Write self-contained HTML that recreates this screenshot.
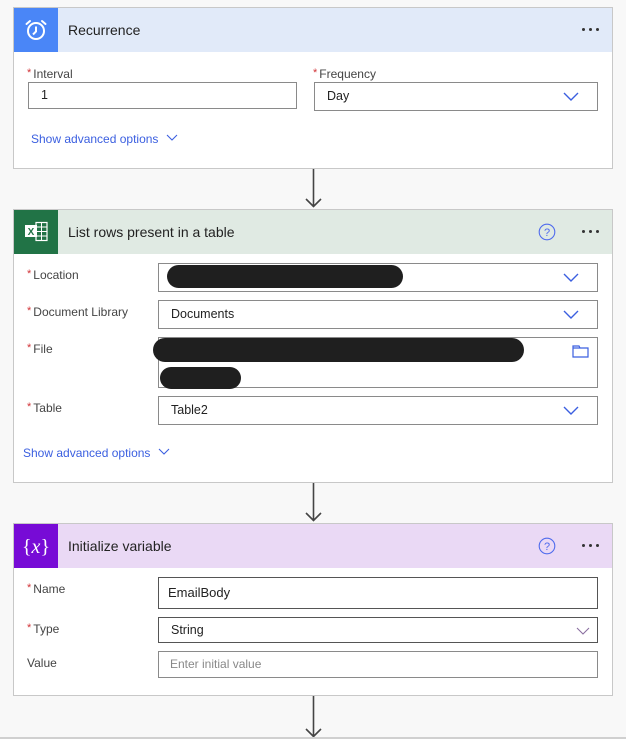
<!DOCTYPE html>
<html><head><meta charset="utf-8">
<style>
*{margin:0;padding:0;box-sizing:border-box}
body{width:626px;height:739px;background:#f8f8f8;font-family:"Liberation Sans",sans-serif;position:relative;overflow:hidden;color:#222}
.a{position:absolute}
.card{position:absolute;left:13px;width:600px;background:#fff;border:1px solid #c8c8c8}
.hdr{position:absolute;left:0;top:0;width:598px;height:44px}
.ic{position:absolute;left:0;top:0;width:44px;height:44px}
.title{position:absolute;left:54px;top:14px;font-size:14px;color:#222}
.dots{position:absolute;right:12px;top:20px;width:18px;height:3px}
.dots i{position:absolute;top:0;width:3px;height:3px;border-radius:50%;background:#333}
.lbl{position:absolute;font-size:12px;color:#444}
.lbl b{color:#d13438;font-weight:normal;font-size:11px;margin-right:2px;vertical-align:2px}
.inp{position:absolute;border:1px solid #8a8a8a;background:#fff;font-size:12.5px;color:#222;padding-left:12px}
.adv{position:absolute;font-size:12px;color:#3b5fe0}
.blob{position:absolute;background:#1f1f1f;border-radius:12px}
.help{position:absolute;right:55px;top:12px}
</style></head><body>

<!-- Card 1 -->
<div class="card" style="top:7px;height:162px">
 <div class="hdr" style="background:#e1eaf9"></div>
 <div class="ic" style="background:#4a86f7">
  <svg width="44" height="44" viewBox="0 0 44 44"><g fill="none" stroke="#fff" stroke-width="2"><circle cx="22" cy="23" r="8"/><path d="M22 18.5v5l-3 3"/><path d="M16 13l-3.5 3M28 13l3.5 3" stroke-linecap="round"/></g></svg>
 </div>
 <div class="title">Recurrence</div>
 <div class="dots"><i style="left:0"></i><i style="left:7px"></i><i style="left:14px"></i></div>
</div>
<div class="lbl" style="left:27px;top:67px"><b>*</b>Interval</div>
<div class="inp" style="left:28px;top:82px;width:269px;height:27px;line-height:25px">1</div>
<div class="lbl" style="left:313px;top:67px"><b>*</b>Frequency</div>
<div class="inp" style="left:314px;top:82px;width:284px;height:29px;line-height:27px">Day</div>
<svg class="a" style="left:563px;top:92px" width="16" height="10"><path d="M1 1l7 7 7-7" fill="none" stroke="#3b5fe0" stroke-width="1.4"/></svg>
<div class="adv" style="left:31px;top:132px">Show advanced options</div>
<svg class="a" style="left:166px;top:134px" width="12" height="8"><path d="M1 1l5 5 5-5" fill="none" stroke="#3b5fe0" stroke-width="1.1"/></svg>

<svg class="a" style="left:304px;top:169px" width="20" height="40"><path d="M9.5 0v38M2 30l7.5 7.5L17 30" fill="none" stroke="#444" stroke-width="1.6"/></svg>

<!-- Card 2 -->
<div class="card" style="top:209px;height:274px">
 <div class="hdr" style="background:#e0eae3"></div>
 <div class="ic" style="background:#217346">
  <svg width="44" height="44" viewBox="0 0 44 44"><rect x="22" y="12.5" width="11" height="18" fill="none" stroke="#fff" stroke-width="1.2"/><path d="M22 17h11M22 21.5h11M22 26h11M27.5 12.5v18" stroke="#fff" stroke-width="1"/><rect x="11" y="15" width="12" height="12" fill="#fff"/><text x="17" y="25" font-size="10" font-family="Liberation Sans" font-weight="bold" fill="#217346" text-anchor="middle">X</text></svg>
 </div>
 <div class="title">List rows present in a table</div>
 <svg class="help" width="20" height="20"><circle cx="10" cy="10" r="7.8" fill="none" stroke="#4f6bed" stroke-width="1.1"/><text x="10" y="14" font-size="11" fill="#4f6bed" text-anchor="middle" font-family="Liberation Sans">?</text></svg>
 <div class="dots"><i style="left:0"></i><i style="left:7px"></i><i style="left:14px"></i></div>
</div>
<div class="lbl" style="left:27px;top:268px"><b>*</b>Location</div>
<div class="inp" style="left:158px;top:263px;width:440px;height:29px"></div>
<div class="blob" style="left:167px;top:265px;width:236px;height:23px"></div>
<svg class="a" style="left:563px;top:273px" width="16" height="10"><path d="M1 1l7 7 7-7" fill="none" stroke="#3b5fe0" stroke-width="1.4"/></svg>

<div class="lbl" style="left:27px;top:305px"><b>*</b>Document Library</div>
<div class="inp" style="left:158px;top:300px;width:440px;height:29px;line-height:27px">Documents</div>
<svg class="a" style="left:563px;top:310px" width="16" height="10"><path d="M1 1l7 7 7-7" fill="none" stroke="#3b5fe0" stroke-width="1.4"/></svg>

<div class="lbl" style="left:27px;top:342px"><b>*</b>File</div>
<div class="inp" style="left:158px;top:337px;width:440px;height:51px"></div>
<div class="blob" style="left:153px;top:338px;width:371px;height:24px"></div>
<div class="blob" style="left:160px;top:367px;width:81px;height:22px"></div>
<svg class="a" style="left:572px;top:344px" width="18" height="14"><path d="M1 4h15v9H1zM1 4V2h6l1 2" fill="none" stroke="#3b5fe0" stroke-width="1.2"/></svg>

<div class="lbl" style="left:27px;top:401px"><b>*</b>Table</div>
<div class="inp" style="left:158px;top:396px;width:440px;height:29px;line-height:27px">Table2</div>
<svg class="a" style="left:563px;top:406px" width="16" height="10"><path d="M1 1l7 7 7-7" fill="none" stroke="#3b5fe0" stroke-width="1.4"/></svg>
<div class="adv" style="left:23px;top:446px">Show advanced options</div>
<svg class="a" style="left:158px;top:448px" width="12" height="8"><path d="M1 1l5 5 5-5" fill="none" stroke="#3b5fe0" stroke-width="1.1"/></svg>

<svg class="a" style="left:304px;top:483px" width="20" height="40"><path d="M9.5 0v38M2 30l7.5 7.5L17 30" fill="none" stroke="#444" stroke-width="1.6"/></svg>

<!-- Card 3 -->
<div class="card" style="top:523px;height:173px">
 <div class="hdr" style="background:#ead9f5"></div>
 <div class="ic" style="background:#770bd6">
  <svg width="44" height="44" viewBox="0 0 44 44"><text x="22" y="29" font-size="20" fill="#fff" text-anchor="middle" font-family="Liberation Serif">{<tspan font-style="italic">x</tspan>}</text></svg>
 </div>
 <div class="title">Initialize variable</div>
 <svg class="help" width="20" height="20"><circle cx="10" cy="10" r="7.8" fill="none" stroke="#4f6bed" stroke-width="1.1"/><text x="10" y="14" font-size="11" fill="#4f6bed" text-anchor="middle" font-family="Liberation Sans">?</text></svg>
 <div class="dots"><i style="left:0"></i><i style="left:7px"></i><i style="left:14px"></i></div>
</div>
<div class="lbl" style="left:27px;top:582px"><b>*</b>Name</div>
<div class="inp" style="left:158px;top:577px;width:440px;height:32px;line-height:30px;font-size:13px;border-color:#555;padding-left:9px">EmailBody</div>
<div class="lbl" style="left:27px;top:622px"><b>*</b>Type</div>
<div class="inp" style="left:158px;top:617px;width:440px;height:26px;line-height:24px;border-color:#555">String</div>
<svg class="a" style="left:576px;top:627px" width="14" height="8"><path d="M1 1l6 6 6-6" fill="none" stroke="#8a6fa0" stroke-width="1.1"/></svg>
<div class="lbl" style="left:27px;top:656px">Value</div>
<div class="inp" style="left:158px;top:651px;width:440px;height:27px;line-height:25px;font-size:12px;color:#888;padding-left:11px">Enter initial value</div>

<svg class="a" style="left:304px;top:696px" width="20" height="43"><path d="M9.5 0v41M2 33l7.5 7.5L17 33" fill="none" stroke="#444" stroke-width="1.6"/></svg>
<div class="a" style="left:0;top:737px;width:626px;height:2px;background:#d0d0d0"></div>
</body></html>
